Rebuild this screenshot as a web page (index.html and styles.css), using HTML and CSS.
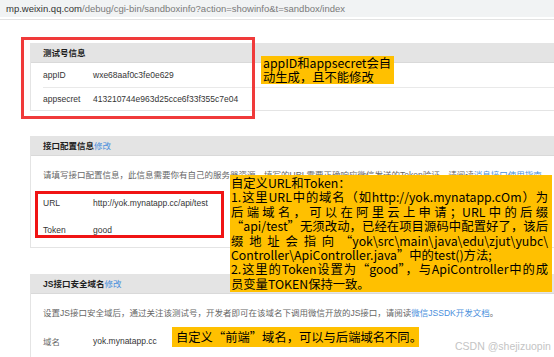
FILE: index.html
```html
<!DOCTYPE html>
<html lang="zh-CN">
<head>
<meta charset="utf-8">
<link rel="stylesheet" href="styles.css">
</head>
<body>
<div class="page">
  <div class="addr"><span class="host">mp.weixin.qq.com</span>/debug/cgi-bin/sandboxinfo?action=showinfo&amp;t=sandbox/index</div>
  <div class="addr-line"></div>

  <div class="main">
    <section class="panel p1">
      <div class="panel-hd">测试号信息</div>
      <div class="panel-bd">
        <div class="kv sep"><span class="k">appID</span><span class="v">wxe68aaf0c3fe0e629</span></div>
        <div class="kv last"><span class="k">appsecret</span><span class="v">413210744e963d25cce6f33f355c7e04</span></div>
      </div>
    </section>

    <section class="panel p2">
      <div class="panel-hd">接口配置信息<a class="link">修改</a></div>
      <div class="panel-bd pad">
        <div class="desc">请填写接口配置信息，此信息需要你有自己的服务器资源，填写的URL需要正确响应微信发送的Token验证，请阅读<a class="link">消息接口使用指南</a>。</div>
        <div class="row"><span class="k">URL</span><span class="v">http://yok.mynatapp.cc/api/test</span></div>
        <div class="row"><span class="k">Token</span><span class="v">good</span></div>
      </div>
    </section>

    <section class="panel p3">
      <div class="panel-hd">JS接口安全域名<a class="link">修改</a></div>
      <div class="panel-bd pad pad3">
        <div class="desc">设置JS接口安全域后，通过关注该测试号，开发者即可在该域名下调用微信开放的JS接口，请阅读<a class="link">微信JSSDK开发文档</a>。</div>
        <div class="row"><span class="k muted">域名</span><span class="v">yok.mynatapp.cc</span></div>
      </div>
    </section>
  </div>

  <div class="redbox rb1"></div>
  <div class="redbox rb2"></div>

  <div class="note n1">appID和appsecret会自<br>动生成，且不能修改</div>

  <div class="note n2">
    <div class="ln">自定义URL和Token：</div>
    <div class="ln j">1.这里URL中的域名（如http://yok.mynatapp.cOm）为</div>
    <div class="ln j">后端域名，可以在阿里云上申请；URL中的后缀</div>
    <div class="ln j">“api/test”无须改动，已经在项目源码中配置好了，该后</div>
    <div class="ln j">缀地址会指向“yok\src\main\java\edu\zjut\yubc\</div>
    <div class="ln">Controller\ApiController.java”中的test()方法;</div>
    <div class="ln j">2.这里的Token设置为“good”，与ApiController中的成</div>
    <div class="ln">员变量TOKEN保持一致。</div>
  </div>

  <div class="note n3">自定义“前端”域名，可以与后端域名不同。</div>

  <div class="wm">CSDN @shejizuopin</div>
</div>
</body>
</html>
```

FILE: styles.css
```css
html, body {
  margin: 0;
  padding: 0;
  overflow: hidden;
  background: #ffffff;
}

.page {
  position: relative;
  width: 554px;
  height: 357px;
  overflow: hidden;
  font-family: "Liberation Sans", "Noto Sans CJK SC", sans-serif;
}

.addr {
  height: 17px;
  line-height: 17px;
  background: #f1f3f4;
  padding-left: 6px;
  font-size: 9.5px;
  color: #7a7a7a;
  white-space: nowrap;
}

.addr .host {
  color: #333333;
}

.addr-line {
  height: 1px;
  margin-top: 2px;
  background: #e3e3e3;
}

.main {
  padding-left: 30px;
  padding-top: 23px;
}

.panel {
  width: 540px;
  border: 1px solid #e4e4e4;
  box-sizing: border-box;
  background: #ffffff;
  font-size: 8.5px;
  color: #353535;
}

.p2 {
  margin-top: 25px;
}

.p3 {
  margin-top: 26px;
}

.panel-hd {
  height: 18px;
  line-height: 18px;
  background: #e4e4e4;
  border-bottom: 1px solid #d9d9d9;
  padding-left: 12px;
  font-weight: bold;
  color: #1e1e1e;
}

.link {
  color: #4a8fdc;
  font-weight: normal;
}

.panel-bd {
  padding: 0 0 0 12px;
}

.kv {
  display: flex;
  align-items: center;
}

.kv.sep {
  height: 24px;
  border-bottom: 1px solid #e9e9e9;
}

.kv.last {
  height: 22px;
}

.k {
  width: 50px;
  flex: none;
}

.muted {
  color: #666666;
}

.v {
  color: #353535;
}

.pad {
  padding-top: 12px;
  padding-bottom: 4px;
}

.pad3 {
  padding-bottom: 3px;
}

.desc {
  height: 14px;
  line-height: 14px;
  color: #666666;
  white-space: nowrap;
  margin-bottom: 7px;
}

.row {
  height: 27px;
  display: flex;
  align-items: center;
}

.redbox {
  position: absolute;
  box-sizing: border-box;
  border: 3px solid #f03a3a;
}

.rb1 {
  left: 21px;
  top: 37px;
  width: 234px;
  height: 82px;
}

.rb2 {
  left: 35px;
  top: 191px;
  width: 189px;
  height: 47px;
  border-color: #f01414;
}

.note {
  position: absolute;
  background: #ffc000;
  color: #000000;
  font-family: "Noto Sans CJK SC", sans-serif;
  font-size: 12.3px;
  box-sizing: border-box;
}

.n1 {
  left: 261px;
  top: 56px;
  width: 133px;
  height: 28px;
  line-height: 13.5px;
  padding: 1px 0 0 2px;
  white-space: nowrap;
}

.n2 {
  left: 230px;
  top: 175px;
  width: 322px;
  height: 117px;
  padding: 1px 4px 0 1px;
}

.ln {
  height: 14.4px;
  line-height: 14.4px;
  white-space: nowrap;
}

.ln.j {
  text-align: justify;
  text-align-last: justify;
}

.n3 {
  left: 172px;
  top: 327px;
  width: 247px;
  height: 20px;
  line-height: 20px;
  padding-left: 4px;
  white-space: nowrap;
}

.wm {
  position: absolute;
  left: 455px;
  top: 339px;
  font-size: 10.5px;
  line-height: 14px;
  color: #c4c4c4;
  white-space: nowrap;
}
```
